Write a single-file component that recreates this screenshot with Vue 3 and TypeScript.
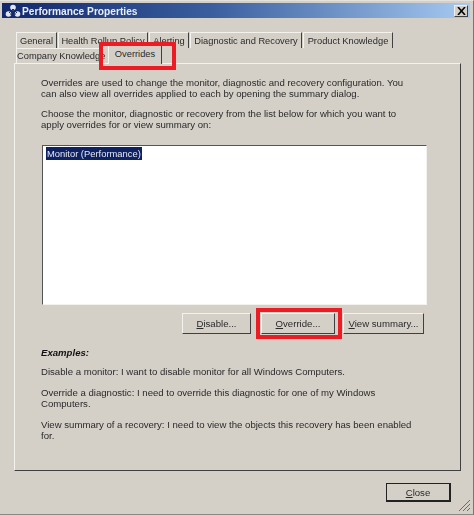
<script setup lang="ts">
const row1 = ['General', 'Health Rollup Policy', 'Alerting', 'Diagnostic and Recovery', 'Product Knowledge']
</script>

<template>
  <div class="window">
    <div class="soft">
      <div class="titlebar">
        <svg class="app-icon" width="16" height="14" viewBox="0 0 16 14">
          <circle cx="8" cy="3.5" r="2.8" fill="#dfe6f2" />
          <circle cx="3.5" cy="10" r="2.8" fill="#dfe6f2" />
          <circle cx="12.5" cy="10" r="2.8" fill="#dfe6f2" />
          <path d="M8 5L4 9M8 5l4 4M5 10h6" stroke="#1a2a50" stroke-width="1" />
        </svg>
        <span class="title">Performance Properties</span>
        <span class="close-x">
          <svg width="9" height="8" viewBox="0 0 9 8"><path d="M1 0l7 8M8 0L1 8" stroke="#000" stroke-width="1.6" /></svg>
        </span>
      </div>
      <div class="body">
        <div class="tabs">
          <div class="tab-row first">
            <span v-for="t in row1" :key="t" class="tab">{{ t }}</span>
          </div>
          <div class="tab-row second">
            <span class="tab company">Company Knowledge</span>
            <span class="tab active">Overrides</span>
          </div>
        </div>
        <div class="panel">
          <p class="para">Overrides are used to change the monitor, diagnostic and recovery configuration. You<br />can also view all overrides applied to each by opening the summary dialog.</p>
          <p class="para choose">Choose the monitor, diagnostic or recovery from the list below for which you want to<br />apply overrides for or view summary on:</p>
          <div class="listbox"><span class="selected">Monitor (Performance)</span></div>
          <div class="actions">
            <button class="btn disable"><u>D</u>isable...</button>
            <button class="btn override"><u>O</u>verride...</button>
            <button class="btn summary"><u>V</u>iew summary...</button>
          </div>
          <p class="examples">Examples:</p>
          <p class="para ex1">Disable a monitor: I want to disable monitor for all Windows Computers.</p>
          <p class="para ex2">Override a diagnostic: I need to override this diagnostic for one of my Windows<br />Computers.</p>
          <p class="para ex2">View summary of a recovery: I need to view the objects this recovery has been enabled<br />for.</p>
        </div>
        <div class="footer">
          <button class="btn close"><u>C</u>lose</button>
        </div>
      </div>
      <svg class="grip" width="12" height="12" viewBox="0 0 12 12">
        <path d="M12 1L1 12M12 5L5 12M12 9L9 12" stroke="#6a6a6a" stroke-width="1" />
      </svg>
    </div>
    <div class="mark mark-tab"></div>
    <div class="mark mark-btn"></div>
  </div>
</template>

<style>
html, body { margin: 0; background: #fff; }
</style>

<style scoped>
.window {
  position: relative;
  width: 474px;
  height: 515px;
  box-sizing: border-box;
  padding: 2px 3px 2px 2px;
  background: #d4d0c8;
  border-top: 1px solid #e4e2dc;
  border-bottom: 1px solid #8a8880;
  border-right: 1px solid #77756f;
  font-family: "Liberation Sans", Arial, sans-serif;
  font-size: 9.6px;
  line-height: 11px;
  color: #2a2a2a;
  overflow: hidden;
}
.soft { position: relative; height: 100%; filter: blur(0.3px); }
.titlebar {
  display: flex;
  align-items: center;
  height: 15px;
  padding: 0 2px 0 3px;
  background: linear-gradient(90deg, #11286c 0%, #3a5f9f 45%, #a6caf0 100%);
}
.app-icon { flex: none; margin-right: 1px; }
.title { color: #e9eef6; font-weight: bold; font-size: 10.2px; flex: 1; padding-top: 1px; }
.close-x {
  display: flex;
  align-items: center;
  justify-content: center;
  width: 14px;
  height: 12px;
  background: #d4d0c8;
  border: 1px solid;
  border-color: #f0eee8 #404040 #404040 #f0eee8;
  box-sizing: border-box;
}
.body { padding: 0 9px 0 12px; }
.tabs { padding: 14px 0 0 2px; height: 31px; box-sizing: content-box; }
.tab-row { display: flex; align-items: flex-end; height: 16px; }
.tab {
  height: 16px;
  box-sizing: border-box;
  padding-top: 3px;
  text-align: center;
  font-size: 9.3px;
  white-space: nowrap;
  border-top: 1px solid #f4f2ec;
  border-left: 1px solid #f4f2ec;
  border-right: 1px solid #404040;
}
.first .tab { margin-right: 1px; }
.first .tab:nth-child(1) { width: 41px; }
.first .tab:nth-child(2) { width: 90px; }
.first .tab:nth-child(3) { width: 40px; }
.first .tab:nth-child(4) { width: 112px; }
.first .tab:nth-child(5) { width: 90px; }
.company { border-right: none; width: 88px; padding-top: 2px; }
.active {
  position: relative;
  z-index: 1;
  width: 54px;
  height: 19px;
  margin-left: 4px;
  padding-top: 3px;
  background: #d4d0c8;
}
.panel {
  box-sizing: border-box;
  height: 408px;
  padding: 13px 10px 0 26px;
  border: 1px solid;
  border-color: #f4f2ec #404040 #404040 #f4f2ec;
}
.para { margin: 0; white-space: nowrap; }
.choose { margin-top: 9px; }
.listbox {
  box-sizing: border-box;
  height: 160px;
  margin: 15px 0 0 1px;
  width: 385px;
  padding: 1px 3px;
  background: #fff;
  border: 1px solid;
  border-color: #555 #f4f2ec #f4f2ec #555;
}
.selected {
  display: inline-block;
  background: #0e2163;
  color: #e6e8f0;
  padding: 0 1px;
  height: 13px;
  line-height: 13px;
  font-size: 9.4px;
}
.actions {
  display: flex;
  margin: 8px 0 0 141px;
}
.btn {
  box-sizing: border-box;
  height: 21px;
  padding: 0;
  font: inherit;
  color: #2a2a2a;
  background: #d4d0c8;
  border: 1px solid;
  border-color: #f4f2ec #404040 #404040 #f4f2ec;
}
.disable { width: 69px; margin-right: 10px; }
.override { width: 74px; margin-right: 8px; }
.summary { width: 81px; }
.examples { margin: 13px 0 0; font-weight: bold; font-style: italic; color: #111; }
.ex1 { margin-top: 8px; }
.ex2 { margin-top: 10px; }
.footer { display: flex; justify-content: flex-end; padding: 12px 10px 0 0; }
.close { width: 65px; height: 19px; border: 1px solid #222; border-right-width: 2px; border-bottom-width: 2px; }
.grip { position: absolute; right: 0; bottom: 1px; }
.mark { position: absolute; border: 4px solid #ed1c24; box-sizing: border-box; }
.mark-tab { left: 99px; top: 41px; width: 77px; height: 28px; }
.mark-btn { left: 256px; top: 307px; width: 86px; height: 31px; }
</style>
